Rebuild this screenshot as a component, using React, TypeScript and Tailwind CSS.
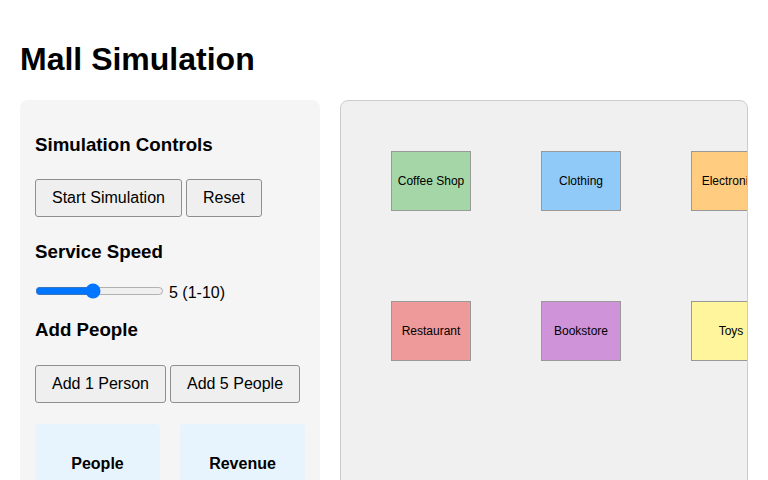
const stores = [
  { name: 'Coffee Shop', x: 50, y: 50, color: 'bg-[#a5d6a7]' },
  { name: 'Clothing', x: 200, y: 50, color: 'bg-[#90caf9]' },
  { name: 'Electronics', x: 350, y: 50, color: 'bg-[#ffcc80]' },
  { name: 'Restaurant', x: 50, y: 200, color: 'bg-[#ef9a9a]' },
  { name: 'Bookstore', x: 200, y: 200, color: 'bg-[#ce93d8]' },
  { name: 'Toys', x: 350, y: 200, color: 'bg-[#fff59d]' },
];

function Btn({ children }: { children: React.ReactNode }) {
  return (
    <button className="mr-[4px] my-[5px] px-4 py-[9px] whitespace-nowrap text-base leading-[normal] bg-[#efefef] border border-[#8f8f8f] rounded-[3px] text-black">
      {children}
    </button>
  );
}

function Heading({ children }: { children: React.ReactNode }) {
  return <h3 className="text-[18.72px] font-bold leading-[normal] my-[18.72px]">{children}</h3>;
}

export default function App() {
  return (
    <div className="p-5 font-['Liberation_Sans',Arial,sans-serif] text-black bg-white min-h-screen">
      <h1 className="text-[32px] font-bold leading-[normal] my-[21.44px]">Mall Simulation</h1>

      <div className="flex gap-5 items-start">
        {/* Controls */}
        <div className="w-[300px] shrink-0 bg-[#f5f5f5] rounded-lg p-[15px] h-[600px]">
          <Heading>Simulation Controls</Heading>
          <div className="flex">
            <Btn>Start Simulation</Btn>
            <Btn>Reset</Btn>
          </div>

          <Heading>Service Speed</Heading>
          <div className="flex items-center h-[19px]">
            <input type="range" min={1} max={10} defaultValue={5} className="w-[129px] h-4 m-0" />
            <span className="text-base leading-[normal] ml-[5px] mt-[4px]">5 (1-10)</span>
          </div>

          <Heading>Add People</Heading>
          <div className="flex">
            <Btn>Add 1 Person</Btn>
            <Btn>Add 5 People</Btn>
          </div>

          <div className="grid grid-cols-2 gap-5 mt-4">
            <div className="bg-[#e8f4fd] rounded p-[10px] text-center">
              <h4 className="text-base font-bold leading-[normal] my-[21.28px]">People</h4>
              <div>0</div>
            </div>
            <div className="bg-[#e8f4fd] rounded p-[10px] text-center">
              <h4 className="text-base font-bold leading-[normal] my-[21.28px]">Revenue</h4>
              <div>$0</div>
            </div>
          </div>
        </div>

        {/* Mall canvas */}
        <div className="relative flex-1 h-[600px] bg-[#f0f0f0] border border-[#ccc] rounded-lg overflow-hidden">
          {stores.map((s) => (
            <div
              key={s.name}
              className={`absolute w-20 h-[60px] border border-[#999] flex items-center justify-center text-xs whitespace-nowrap ${s.color}`}
              style={{ left: s.x, top: s.y }}
            >
              {s.name}
            </div>
          ))}
        </div>
      </div>
    </div>
  );
}
